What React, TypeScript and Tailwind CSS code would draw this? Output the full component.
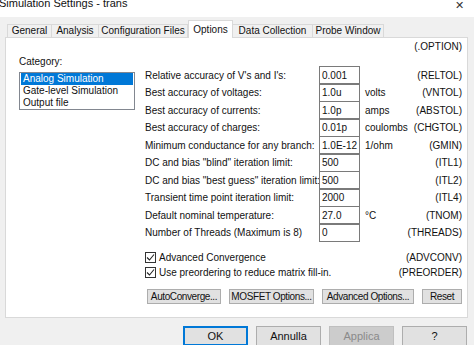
import React from "react";

const rows: { label: string; value: string; unit?: string; code: string }[] = [
  { label: "Relative accuracy of V's and I's:", value: "0.001", code: "(RELTOL)" },
  { label: "Best accuracy of voltages:", value: "1.0u", unit: "volts", code: "(VNTOL)" },
  { label: "Best accuracy of currents:", value: "1.0p", unit: "amps", code: "(ABSTOL)" },
  { label: "Best accuracy of charges:", value: "0.01p", unit: "coulombs", code: "(CHGTOL)" },
  { label: "Minimum conductance for any branch:", value: "1.0E-12", unit: "1/ohm", code: "(GMIN)" },
  { label: 'DC and bias "blind" iteration limit:', value: "500", code: "(ITL1)" },
  { label: 'DC and bias "best guess" iteration limit:', value: "500", code: "(ITL2)" },
  { label: "Transient time point iteration limit:", value: "2000", code: "(ITL4)" },
  { label: "Default nominal temperature:", value: "27.0", unit: "°C", code: "(TNOM)" },
  { label: "Number of Threads (Maximum is 8)", value: "0", code: "(THREADS)" },
];

const tabs = [
  { name: "General", w: "w-[45px]" },
  { name: "Analysis", w: "w-[47px]" },
  { name: "Configuration Files", w: "w-[89px]" },
  { name: "Options", w: "w-[45px]", active: true },
  { name: "Data Collection", w: "w-[80px]" },
  { name: "Probe Window", w: "w-[71px]" },
];

function Check() {
  return (
    <span className="w-[11px] h-[11px] border border-[#333] bg-white flex items-center justify-center">
      <svg width="9" height="9" viewBox="0 0 9 9">
        <path d="M1 4.5 L3.5 7 L8 1.5" fill="none" stroke="#222" strokeWidth="1.1" />
      </svg>
    </span>
  );
}

function Btn({ children, w }: { children: React.ReactNode; w: string }) {
  return (
    <div
      className={`${w} h-[15px] bg-[#e1e1e1] border border-[#adadad] flex items-center justify-center leading-none whitespace-nowrap text-[10px] tracking-[-0.4px]`}
    >
      {children}
    </div>
  );
}

export default function App() {
  return (
    <div
      className="w-[474px] h-[345px] bg-[#f0f0f0] overflow-hidden text-[10px] text-[#111]"
      style={{ fontFamily: '"Liberation Sans", Arial, sans-serif' }}
    >
      {/* title bar */}
      <div className="h-[17px] bg-white flex justify-between overflow-hidden">
        <div className="text-[11px] leading-[12px] -mt-[3px] -ml-px">Simulation Settings - trans</div>
        <div className="text-[11px] leading-[12px] -mt-[1px] mr-[10px] text-[#333]">✕</div>
      </div>

      {/* tabs */}
      <div className="mt-[3px] h-[17px] flex items-end pl-[7px]">
        {tabs.map((t) =>
          t.active ? (
            <div
              key={t.name}
              className={`${t.w} h-[18px] -mb-px relative z-10 bg-white border border-b-0 border-[#d9d9d9] flex items-center justify-center pb-[1px]`}
            >
              {t.name}
            </div>
          ) : (
            <div
              key={t.name}
              className={`${t.w} h-[13px] bg-[#f0f0f0] border border-b-0 border-l-0 first:border-l border-[#d9d9d9] flex items-center justify-center leading-none`}
            >
              {t.name}
            </div>
          )
        )}
      </div>

      {/* panel */}
      <div className="ml-[5px] w-[463px] h-[281px] border border-[#d9d9d9] bg-white flex">
        <div className="w-[139px] pl-[13px] pt-[18px]">
          <div className="leading-[12px]">Category:</div>
          <div className="mt-[4px] w-[116px] h-[38px] border border-[#828790] leading-[12px]">
            <div className="bg-[#0078d7] text-white pl-[2px] mx-px">Analog Simulation</div>
            <div className="pl-[3px]">Gate-level Simulation</div>
            <div className="pl-[3px]">Output file</div>
          </div>
        </div>

        <div className="flex-1 pr-[5px] pt-[3px]">
          <div className="leading-[12px] text-right">(.OPTION)</div>
          <div className="mt-[13px]">
            {rows.map((r) => (
              <div key={r.code} className="h-[17.5px] grid grid-cols-[174px_41px_1fr_auto] items-center">
                <span className="whitespace-nowrap">{r.label}</span>
                <span className="h-[18px] border border-[#7a7a7a] bg-white pl-[2px] flex items-center">{r.value}</span>
                <span className="pl-[5px]">{r.unit ?? ""}</span>
                <span className="text-right">{r.code}</span>
              </div>
            ))}
          </div>

          <div className="mt-[8.5px] h-[15px] flex items-center">
            <Check />
            <span className="ml-[3px] flex-1">Advanced Convergence</span>
            <span>(ADVCONV)</span>
          </div>
          <div className="h-[15px] flex items-center">
            <Check />
            <span className="ml-[3px] flex-1">Use preordering to reduce matrix fill-in.</span>
            <span>(PREORDER)</span>
          </div>

          <div className="mt-[9.5px] pl-[2px] flex justify-between">
            <Btn w="w-[74px]">AutoConverge...</Btn>
            <Btn w="w-[85px]">MOSFET Options...</Btn>
            <Btn w="w-[92px]">Advanced Options...</Btn>
            <Btn w="w-[40px]">Reset</Btn>
          </div>
        </div>
      </div>

      {/* dialog buttons */}
      <div className="mt-[8px] flex justify-end gap-[8px] pr-[7px]">
        <div className="w-[65px] h-[20px] bg-[#e1e1e1] border-2 border-[#0078d7] flex items-center justify-center text-[11px]">OK</div>
        <div className="w-[65px] h-[20px] bg-[#e1e1e1] border border-[#adadad] flex items-center justify-center text-[11px]">Annulla</div>
        <div className="w-[65px] h-[20px] bg-[#cccccc] border border-[#bfbfbf] flex items-center justify-center text-[11px] text-[#8a8a8a]">Applica</div>
        <div className="w-[65px] h-[20px] bg-[#e1e1e1] border border-[#adadad] flex items-center justify-center text-[11px]">?</div>
      </div>
    </div>
  );
}
